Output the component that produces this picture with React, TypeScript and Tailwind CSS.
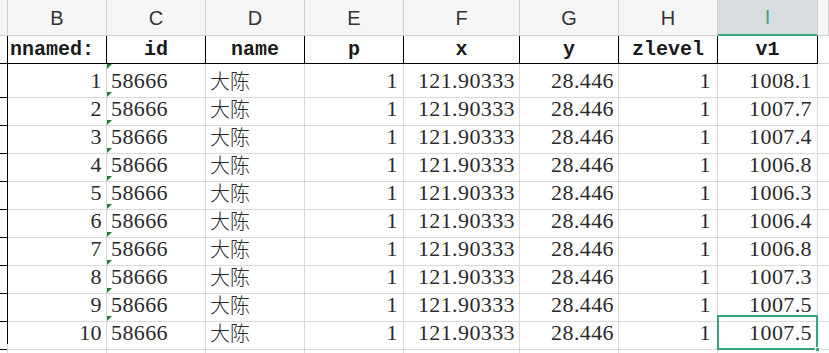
import React from "react";

const cols = ["", "B", "C", "D", "E", "F", "G", "H", "I", ""];
const widths = "grid-cols-[8px_99px_99px_99px_99px_116px_99px_99px_100px_11px]";
const v1 = ["1008.1", "1007.7", "1007.4", "1006.8", "1006.3", "1006.4", "1006.8", "1007.3", "1007.5", "1007.5"];
const headers = ["nnamed:", "id", "name", "p", "x", "y", "zlevel", "v1"];

const serif = "font-[family-name:Liberation_Serif,Noto_Sans_CJK_SC,serif] text-[22px] text-[#2a2a2a] tracking-[0.4px]";

export default function App() {
  return (
    <div className="w-[829px] h-[353px] overflow-hidden bg-white">
      {/* column letters */}
      <div className={`grid ${widths} h-[36px] bg-[#f6f6f6]`}>
        {cols.map((c, i) => (
          <div
            key={i}
            className={
              i === 8
                ? "flex items-center justify-center border-r border-[#d0d0d0] border-b-2 border-b-[#36a67a] bg-[#d8dbdf] text-[#36a67a] font-[family-name:Liberation_Sans,sans-serif] text-[20px]"
                : "flex items-center justify-center border-r border-b border-[#d0d0d0] text-[#333] font-[family-name:Liberation_Sans,sans-serif] text-[20px]"
            }
          >
            {c}
          </div>
        ))}
      </div>
      {/* header row */}
      <div className={`grid ${widths} h-[28px]`}>
        <div className="border-r border-b border-black" />
        {headers.map((h, i) => (
          <div
            key={i}
            className={`flex items-center overflow-hidden whitespace-nowrap border-r border-b border-black font-[family-name:Liberation_Mono,monospace] font-bold text-[20px] text-[#1a1a1a] ${
              i === 0 ? "justify-start pl-[2px]" : "justify-center"
            }`}
          >
            {h}
          </div>
        ))}
        <div className="border-b border-[#d4d4d4]" />
      </div>
      {/* data rows */}
      {v1.map((v, r) => (
        <div key={r} className={`grid ${widths} h-[28px]`}>
          <div className="border-r border-b border-black" />
          <div className={`flex items-center justify-end pr-[4px] border-r border-b border-[#d9d9d9] ${serif}`}>{r + 1}</div>
          <div className={`relative flex items-center justify-start pl-[4px] border-r border-b border-[#d9d9d9] ${serif}`}>
            <span className="absolute left-0 top-0 w-0 h-0 border-t-[5px] border-r-[5px] border-t-[#1f7a3e] border-r-transparent" />
            58666
          </div>
          <div className="flex items-center justify-start pl-[4px] border-r border-b border-[#d9d9d9] font-[family-name:Noto_Sans_CJK_SC,sans-serif] font-light text-[20px] text-[#2a2a2a]">
            大陈
          </div>
          <div className={`flex items-center justify-end pr-[5px] border-r border-b border-[#d9d9d9] ${serif}`}>1</div>
          <div className={`flex items-center justify-end pr-[4px] border-r border-b border-[#d9d9d9] ${serif}`}>121.90333</div>
          <div className={`flex items-center justify-end pr-[4px] border-r border-b border-[#d9d9d9] ${serif}`}>28.446</div>
          <div className={`flex items-center justify-end pr-[6px] border-r border-b border-[#d9d9d9] ${serif}`}>1</div>
          <div className={`relative flex items-center justify-end pr-[5px] border-r border-b border-[#d9d9d9] ${serif}`}>
            {v}
            {r === 9 && (
              <>
                <span className="absolute left-[-1px] top-[-1px] right-[-1px] bottom-[-1px] border-2 border-[#36a67a]" />
                <span className="absolute right-[-3px] bottom-[-3px] w-[5px] h-[5px] bg-[#36a67a] border border-white" />
              </>
            )}
          </div>
          <div className="border-b border-[#d9d9d9]" />
        </div>
      ))}
      <div className={`grid ${widths} h-[9px]`}>
        {cols.map((_, i) => (
          <div key={i} className={i === 9 ? "" : "border-r border-[#d9d9d9]"} />
        ))}
      </div>
    </div>
  );
}
